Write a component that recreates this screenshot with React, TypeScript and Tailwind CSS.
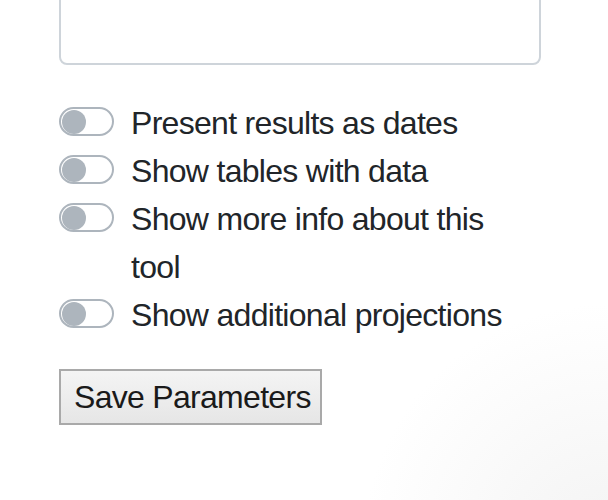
const options = [
  "Present results as dates",
  "Show tables with data",
  "Show more info about this tool",
  "Show additional projections",
]

function Switch() {
  return (
    <span className="mt-2 flex h-[29px] w-[55px] shrink-0 items-center rounded-full border-2 border-[#adb5bd] bg-white pl-[1px]">
      <span className="h-6 w-6 rounded-full bg-[#adb5bd]" />
    </span>
  )
}

export default function App() {
  return (
    <div className="h-[500px] w-[608px] overflow-hidden bg-[radial-gradient(circle_at_100%_110%,#f3f3f3,#ffffff_30%)] font-['Liberation_Sans',Arial,sans-serif] tracking-[-0.7px] text-[#212529]">
      <div className="ml-[59px] w-[482px]">
        <div className="-mt-[20px] h-[85px] rounded-lg border-2 border-[#ced4da]" />

        <div className="mt-[34px] flex flex-col pr-3">
          {options.map((label) => (
            <label key={label} className="flex gap-[17px] text-[32px] leading-[48px]">
              <Switch />
              <span>{label}</span>
            </label>
          ))}
        </div>

        <button className="mt-[30px] h-[56px] border-2 border-[#a9a9a9] bg-gradient-to-b from-[#f4f4f4] to-[#e6e6e6] pl-[13px] pr-[9px] text-[32px] leading-none text-[#1a1a1a]">
          Save Parameters
        </button>
      </div>
    </div>
  )
}
